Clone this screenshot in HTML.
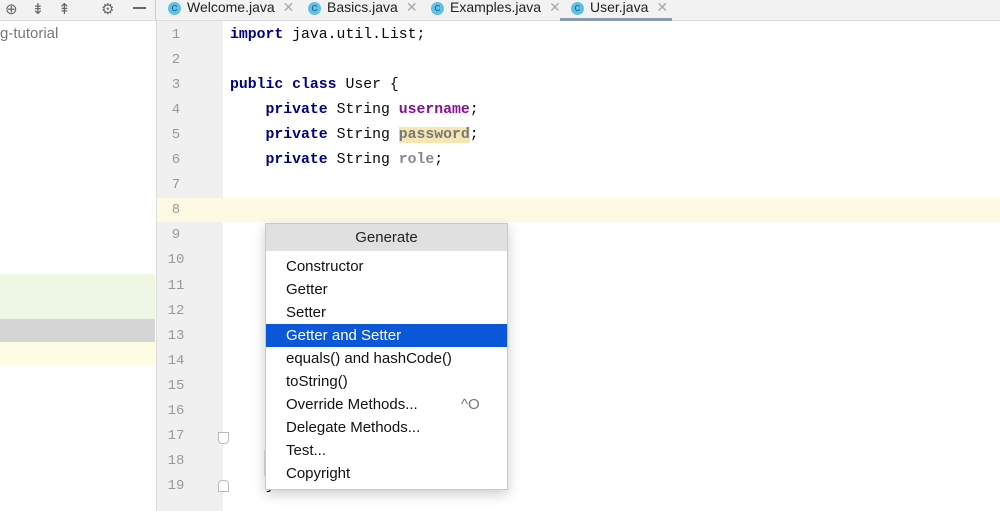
<!DOCTYPE html>
<html><head><style>
body{margin:0;width:1000px;height:511px;overflow:hidden;background:#fff;font-family:"Liberation Sans",sans-serif;position:relative}
.abs{position:absolute}
.tabs{left:0;top:0;width:1000px;height:20px;background:#f2f2f2;border-bottom:1px solid #ddd}
.tab{top:0;height:20px;font-size:14px;line-height:15px;color:#222}
.ci{display:inline-block;width:13px;height:13px;border-radius:50%;background:#5fc1e6;color:#1a4f66;font-size:8px;line-height:13px;text-align:center;vertical-align:middle;margin-right:6px}
.x{color:#aaa;margin-left:8px}
.gut{left:156px;top:21px;width:66px;height:490px;background:#f0f0f0;border-left:1px solid #ddd}
.ln{left:157px;width:38px;text-align:center;font-family:"Liberation Mono",monospace;font-size:14px;color:#999;height:25px;line-height:25px}
.code{left:230px;font-family:"Liberation Mono",monospace;font-size:14.8px;height:25px;line-height:25px;color:#080808;white-space:pre}
.k{color:#000080;font-weight:bold}
.pop{left:265px;top:223px;width:241px;height:265px;background:#fff;border:1px solid #c8c8c8;box-shadow:0 4px 12px rgba(0,0,0,.2)}
.hd{height:27px;background:#e0e0e0;text-align:center;font-size:15px;line-height:27px;color:#222}
.it{height:23px;line-height:23px;font-size:15px;padding-left:20px;color:#111;position:relative}
.sel{background:#0a57d9;color:#fff}
</style></head><body>
<div class="abs tabs"></div>
<div class="abs" style="left:5px;top:0;font-size:15px;color:#666;letter-spacing:14px">⊕⇟⇞</div>
<div class="abs" style="left:101px;top:0;font-size:15px;color:#666">⚙</div>
<div class="abs" style="left:133px;top:7px;width:13px;height:2px;background:#666"></div>
<div class="abs" style="left:155px;top:0;width:1px;height:20px;background:#ccc"></div>
<div class="abs tab" style="left:168px"><span class="ci">C</span>Welcome.java<span class="x">✕</span></div>
<div class="abs tab" style="left:308px"><span class="ci">C</span>Basics.java<span class="x">✕</span></div>
<div class="abs tab" style="left:431px"><span class="ci">C</span>Examples.java<span class="x">✕</span></div>
<div class="abs tab" style="left:571px"><span class="ci">C</span>User.java<span class="x">✕</span></div>
<div class="abs" style="left:560px;top:18px;width:112px;height:3px;background:#8a9bb4"></div>
<div class="abs" style="left:0;top:25px;font-size:15px;color:#777">g-tutorial</div>
<div class="abs" style="left:0;top:274px;width:155px;height:45px;background:#edf7e4"></div>
<div class="abs" style="left:0;top:319px;width:155px;height:23px;background:#d5d5d5"></div>
<div class="abs" style="left:0;top:342px;width:155px;height:23px;background:#fefde4"></div>
<div class="abs gut"></div>
<div class="abs" style="left:157px;top:198px;width:843px;height:24px;background:#fdf9e3"></div>
<div class="abs ln" style="top:23px">1</div><div class="abs ln" style="top:48px">2</div><div class="abs ln" style="top:73px">3</div><div class="abs ln" style="top:98px">4</div><div class="abs ln" style="top:123px">5</div><div class="abs ln" style="top:148px">6</div><div class="abs ln" style="top:173px">7</div><div class="abs ln" style="top:198px">8</div><div class="abs ln" style="top:223px">9</div><div class="abs ln" style="top:248px">10</div><div class="abs ln" style="top:274px">11</div><div class="abs ln" style="top:299px">12</div><div class="abs ln" style="top:324px">13</div><div class="abs ln" style="top:349px">14</div><div class="abs ln" style="top:374px">15</div><div class="abs ln" style="top:399px">16</div><div class="abs ln" style="top:424px">17</div><div class="abs ln" style="top:449px">18</div><div class="abs ln" style="top:474px">19</div>
<div class="abs" style="left:218px;top:432px;width:9px;height:10px;border:1px solid #bbb;background:#fff;border-radius:0 0 4px 4px"></div>
<div class="abs" style="left:218px;top:480px;width:9px;height:10px;border:1px solid #bbb;background:#fff;border-radius:4px 4px 0 0"></div>
<div class="abs" style="left:264px;top:450px;width:1px;height:26px;background:#ddd"></div>
<div class="abs code" style="top:23px"><span class="k">import</span> java.util.List;</div>
<div class="abs code" style="top:73px"><span class="k">public class</span> User {</div>
<div class="abs code" style="top:98px">    <span class="k">private</span> String <span style="color:#871094;font-weight:bold">username</span>;</div>
<div class="abs code" style="top:123px">    <span class="k">private</span> String <span style="color:#777;font-weight:bold;background:#f6e6b4">password</span>;</div>
<div class="abs code" style="top:148px">    <span class="k">private</span> String <span style="color:#888;font-weight:bold">role</span>;</div>
<div class="abs code" style="top:474px">    }</div>
<div class="abs pop">
<div class="hd">Generate</div>
<div style="height:4px"></div>
<div class="it">Constructor</div>
<div class="it">Getter</div>
<div class="it">Setter</div>
<div class="it sel">Getter and Setter</div>
<div class="it">equals() and hashCode()</div>
<div class="it">toString()</div>
<div class="it">Override Methods...<span style="position:absolute;left:195px;color:#777">^O</span></div>
<div class="it">Delegate Methods...</div>
<div class="it">Test...</div>
<div class="it">Copyright</div>
</div>
</body></html>
